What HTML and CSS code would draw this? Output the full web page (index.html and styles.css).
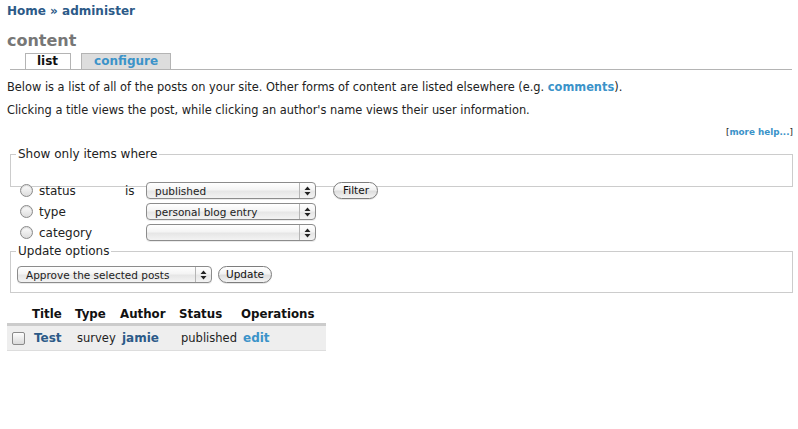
FILE: index.html
```html
<!DOCTYPE html>
<html>
<head>
<meta charset="utf-8">
<title>content</title>
<link rel="stylesheet" href="styles.css">
</head>
<body>
<div class="page">
  <div class="breadcrumb"><a class="link-dark" href="#">Home</a> » <a class="link-dark" href="#">administer</a></div>
  <h1 class="title">content</h1>
  <ul class="tabs">
    <li class="tab active"><a href="#">list</a></li>
    <li class="tab"><a href="#">configure</a></li>
  </ul>
  <p class="intro intro-first">Below is a list of all of the posts on your site. Other forms of content are listed elsewhere (e.g. <a class="link-light" href="#">comments</a>).</p>
  <p class="intro">Clicking a title views the post, while clicking an author's name views their user information.</p>
  <div class="more-help">[<a class="link-light" href="#">more help...</a>]</div>

  <fieldset class="box box-filter">
    <legend>Show only items where</legend>
  </fieldset>
  <div class="filters">
    <div class="filter-label"><span class="radio"></span>status</div>
    <div class="filter-is">is</div>
    <div class="select"><span class="select-value">published</span><span class="select-arrows"><svg width="7" height="10" viewBox="0 0 7 10"><path d="M3.5 0.5 L6.5 4 L0.5 4 Z M0.5 6 L6.5 6 L3.5 9.5 Z" fill="#222"/></svg></span></div>
    <div class="filter-action"><button class="btn btn-filter">Filter</button></div>

    <div class="filter-label"><span class="radio"></span>type</div>
    <div class="filter-is"></div>
    <div class="select"><span class="select-value">personal blog entry</span><span class="select-arrows"><svg width="7" height="10" viewBox="0 0 7 10"><path d="M3.5 0.5 L6.5 4 L0.5 4 Z M0.5 6 L6.5 6 L3.5 9.5 Z" fill="#222"/></svg></span></div>
    <div class="filter-action"></div>

    <div class="filter-label"><span class="radio"></span>category</div>
    <div class="filter-is"></div>
    <div class="select"><span class="select-value"></span><span class="select-arrows"><svg width="7" height="10" viewBox="0 0 7 10"><path d="M3.5 0.5 L6.5 4 L0.5 4 Z M0.5 6 L6.5 6 L3.5 9.5 Z" fill="#222"/></svg></span></div>
    <div class="filter-action"></div>
  </div>

  <fieldset class="box box-update">
    <legend>Update options</legend>
    <div class="update-row">
      <div class="select select-wide"><span class="select-value">Approve the selected posts</span><span class="select-arrows"><svg width="7" height="10" viewBox="0 0 7 10"><path d="M3.5 0.5 L6.5 4 L0.5 4 Z M0.5 6 L6.5 6 L3.5 9.5 Z" fill="#222"/></svg></span></div>
      <button class="btn">Update</button>
    </div>
  </fieldset>

  <table class="posts">
    <thead>
      <tr>
        <th class="c0"></th>
        <th class="c1">Title</th>
        <th class="c2">Type</th>
        <th class="c3">Author</th>
        <th class="c4">Status</th>
        <th class="c5">Operations</th>
      </tr>
    </thead>
    <tbody>
      <tr>
        <td class="c0"><span class="checkbox"></span></td>
        <td class="c1"><a class="link-dark" href="#">Test</a></td>
        <td class="c2">survey</td>
        <td class="c3"><a class="link-dark" href="#">jamie</a></td>
        <td class="c4">published</td>
        <td class="c5"><a class="link-light" href="#">edit</a></td>
      </tr>
    </tbody>
  </table>
</div>
</body>
</html>
```

FILE: styles.css
```css
html, body {
  margin: 0;
  padding: 0;
  background: #fff;
}
body {
  font-family: "DejaVu Sans", Verdana, sans-serif;
  color: #222;
  font-size: 11px;
}
a {
  text-decoration: none;
  font-weight: bold;
}
.link-dark { color: #2c5a88; }
.link-light { color: #3b93c9; }

.page {
  padding: 3px 5px 0 7px;
}

.breadcrumb {
  font-size: 12px;
  line-height: 16px;
  font-weight: bold;
  color: #2c5a88;
}

.title {
  margin: 12px 0 0;
  font-size: 16px;
  line-height: 20px;
  font-weight: bold;
  color: #777;
}

.tabs {
  list-style: none;
  margin: 2px 1px 0 3px;
  padding: 0 0 0 15px;
  display: flex;
  gap: 10px;
  border-bottom: 1px solid #b4b4b4;
}
.tab {
  border: 1px solid #b4b4b4;
  border-bottom: none;
  background: #ddd;
  font-size: 12px;
  line-height: 15px;
  padding: 0 12px 0 12px;
}
.tab a { color: #3b93c9; }
.tab.active {
  background: #fff;
  padding: 0 12px 0 11px;
}
.tab.active a { color: #111; }

.intro {
  margin: 0;
  line-height: 16px;
  font-size: 11.4px;
}
.intro-first { margin-top: 9px; }
.intro + .intro { margin-top: 7px; }

.more-help {
  margin-top: 7px;
  text-align: right;
  font-size: 8.8px;
  line-height: 14px;
}

.box {
  margin: 0 0 0 3px;
  border: 1px solid #ccc;
  min-width: 0;
}
.box legend {
  font-size: 12px;
  line-height: 16px;
  padding: 0 2px;
  margin-left: -1px;
  color: #222;
}
.box-filter {
  margin-top: 7px;
  padding: 0 6px 24px;
}

.filters {
  margin: -7px 0 0 13px;
  display: grid;
  grid-template-columns: 105px 21px 170px auto;
  grid-auto-rows: 21px;
  align-items: center;
  font-size: 12px;
}
.filter-label {
  display: flex;
  align-items: center;
  gap: 6px;
}
.radio {
  width: 11px;
  height: 11px;
  border: 1px solid #8a8a8a;
  border-radius: 50%;
  background: linear-gradient(#fdfdfd, #dcdcdc);
  box-shadow: inset 0 1px 1px rgba(0,0,0,0.15);
  flex: none;
}
.filter-action {
  padding-left: 17px;
}

.select {
  height: 15px;
  border: 1px solid #8c8c8c;
  border-radius: 4px;
  background: linear-gradient(#ffffff 0%, #f4f4f4 45%, #e6e6e6 55%, #f3f3f3 100%);
  display: flex;
  align-items: center;
  font-size: 10.5px;
  box-shadow: 0 1px 0 rgba(0,0,0,0.08);
}
.select-value {
  flex: 1;
  padding-left: 8px;
  white-space: nowrap;
  overflow: hidden;
}
.select-arrows {
  width: 15px;
  height: 15px;
  border-left: 1px solid #b5b5b5;
  display: flex;
  align-items: center;
  justify-content: center;
}

.btn {
  font-family: "DejaVu Sans", Verdana, sans-serif;
  font-size: 10.5px;
  line-height: 13px;
  height: 17px;
  padding: 0 7px;
  border: 1px solid #7d7d7d;
  border-radius: 9px;
  background: linear-gradient(#ffffff 0%, #f2f2f2 45%, #dedede 55%, #f4f4f4 100%);
  color: #111;
  box-shadow: 0 1px 0 rgba(0,0,0,0.1);
}
.btn-filter {
  padding: 0 8px 0 9px;
}

.box-update {
  margin-top: 0;
  padding: 7px 6px 9px;
}
.update-row {
  display: flex;
  align-items: center;
  gap: 6px;
}
.select-wide {
  width: 193px;
}

.posts {
  margin-top: 13px;
  border-collapse: collapse;
  width: 319px;
  table-layout: fixed;
}
.posts th {
  text-align: left;
  font-size: 11.8px;
  line-height: 16px;
  padding: 0 3px 1px;
  border-bottom: 3px solid #ccc;
  color: #111;
}
.posts td {
  font-size: 11.5px;
  line-height: 16px;
  padding: 4px 1px 4px 5px;
  background: #eee;
  border-bottom: 1px solid #ddd;
  white-space: nowrap;
}
.posts a { font-size: 12px; }
.c0 { width: 16px; }
.c1 { width: 37px; }
.c2 { width: 39px; }
.c3 { width: 53px; }
.c4 { width: 56px; }
.c5 { width: 82px; }
.posts td.c0 { padding-left: 5px; padding-right: 0; }
.checkbox {
  display: block;
  width: 11px;
  height: 11px;
  border: 1px solid #8a8a8a;
  border-radius: 2px;
  background: linear-gradient(#fdfdfd, #dadada);
}
```
